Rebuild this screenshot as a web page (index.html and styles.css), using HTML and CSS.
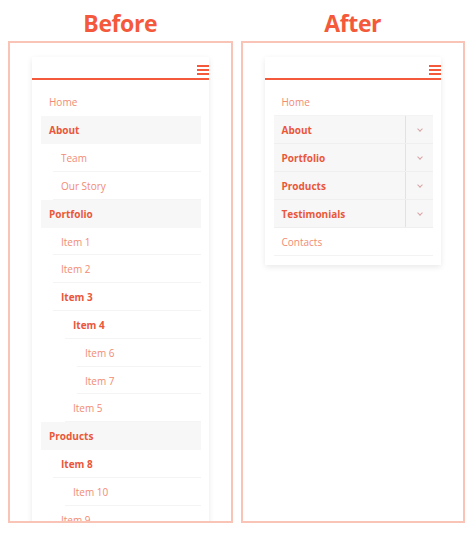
FILE: index.html
```html
<!DOCTYPE html>
<html lang="en">

<head>
    <meta charset="UTF-8">
    <meta name="viewport" content="width=device-width, initial-scale=1.0">
    <title>Mobile Menu: Before / After</title>
    <link rel="stylesheet" href="styles.css">
</head>

<body>
    <div class="compare">
        <section class="column">
            <h2 class="title">Before</h2>
            <div class="frame">
                <nav class="panel">
                    <div class="bar"><span class="burger"><i></i><i></i><i></i></span></div>
                    <ul class="menu">
                        <li><a href="#">Home</a></li>
                        <li class="parent"><a href="#">About</a>
                            <ul>
                                <li><a href="#">Team</a></li>
                                <li><a href="#">Our Story</a></li>
                            </ul>
                        </li>
                        <li class="parent"><a href="#">Portfolio</a>
                            <ul>
                                <li><a href="#">Item 1</a></li>
                                <li><a href="#">Item 2</a></li>
                                <li class="sub"><a href="#">Item 3</a>
                                    <ul>
                                        <li class="sub"><a href="#">Item 4</a>
                                            <ul>
                                                <li><a href="#">Item 6</a></li>
                                                <li><a href="#">Item 7</a></li>
                                            </ul>
                                        </li>
                                        <li><a href="#">Item 5</a></li>
                                    </ul>
                                </li>
                            </ul>
                        </li>
                        <li class="parent"><a href="#">Products</a>
                            <ul>
                                <li class="sub"><a href="#">Item 8</a>
                                    <ul>
                                        <li><a href="#">Item 10</a></li>
                                    </ul>
                                </li>
                                <li><a href="#">Item 9</a></li>
                            </ul>
                        </li>
                    </ul>
                </nav>
            </div>
        </section>

        <section class="column">
            <h2 class="title">After</h2>
            <div class="frame">
                <nav class="panel">
                    <div class="bar"><span class="burger"><i></i><i></i><i></i></span></div>
                    <ul class="menu collapsed">
                        <li><a href="#">Home</a></li>
                        <li class="parent"><a href="#">About</a><span class="toggle"></span></li>
                        <li class="parent"><a href="#">Portfolio</a><span class="toggle"></span></li>
                        <li class="parent"><a href="#">Products</a><span class="toggle"></span></li>
                        <li class="parent"><a href="#">Testimonials</a><span class="toggle"></span></li>
                        <li><a href="#">Contacts</a></li>
                    </ul>
                </nav>
            </div>
        </section>
    </div>
</body>

</html>
```

FILE: styles.css
```css
body {
    margin: 0;
    background: #fff;
    font-family: 'Open Sans', sans-serif;
}

.compare {
    display: flex;
    gap: 8px;
    padding: 0 9px 0 8px;
}

.column {
    flex: 1;
    min-width: 0;
}

.title {
    margin: 6px 0 1px;
    font-size: 23px;
    line-height: 34px;
    font-weight: 700;
    text-align: center;
    color: #f4593b;
    letter-spacing: -0.4px;
}

.frame {
    box-sizing: border-box;
    height: 482px;
    border: 2px solid #f9c3b6;
    padding: 14px 22px 0;
    overflow: hidden;
}

.panel {
    background: #fff;
    box-shadow: 0 2px 6px rgba(0, 0, 0, 0.09);
    padding-bottom: 9px;
}

.bar {
    height: 21px;
    border-bottom: 2px solid #f4593b;
    display: flex;
    justify-content: flex-end;
    align-items: flex-start;
}

.burger {
    display: flex;
    flex-direction: column;
    gap: 2.5px;
    width: 12px;
    margin-top: 8px;
}

.burger i {
    display: block;
    height: 1.5px;
    background: #f4593b;
}

.menu,
.menu ul {
    list-style: none;
    margin: 0;
    padding: 0;
}

.menu {
    padding: 8px 8px 0 9px;
}

.menu ul {
    padding-left: 12px;
}

.menu a {
    display: block;
    height: 28px;
    line-height: 28px;
    padding-left: 8px;
    font-size: 10px;
    color: #f28b73;
    text-decoration: none;
}

/* nested rows are a touch shorter and carry a hairline */
.menu ul a {
    height: 26.8px;
    border-bottom: 1px solid #f4f4f4;
}

.menu li.parent > a {
    background: #f7f7f7;
    font-weight: 700;
    color: #ea573b;
}

.menu li.sub > a {
    font-weight: 700;
    color: #ea573b;
}

/* collapsed variant: top items only, with a toggle cell */
.collapsed li {
    border-bottom: 1px solid #f3f3f3;
}

.collapsed a {
    height: 27px;
}

.collapsed li.parent {
    display: flex;
    background: #f7f7f7;
    border-bottom-color: #efefef;
}

.collapsed li.parent > a {
    flex: 1;
    background: none;
}

.toggle {
    width: 27px;
    border-left: 1px solid #e2e2e2;
    position: relative;
}

.toggle::after {
    content: "";
    position: absolute;
    left: 12px;
    top: 11px;
    width: 3px;
    height: 3px;
    border-right: 1px solid #d9a3a3;
    border-bottom: 1px solid #d9a3a3;
    transform: rotate(45deg);
}
```
